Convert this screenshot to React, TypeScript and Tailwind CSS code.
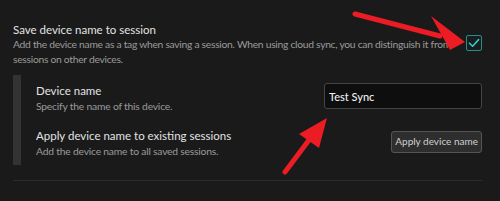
export default function App() {
  return (
    <div className="relative h-[201px] w-[500px] overflow-hidden bg-[#1a1a1a] font-['Lato',sans-serif]">
      <div className="pl-[13px] pr-[18px] pt-[22px]">
        <div className="flex items-start gap-2">
          <div className="min-w-0 flex-1">
            <div className="text-[11.5px] leading-[15px] text-[#e3e3e3]">Save device name to session</div>
            <p className="whitespace-nowrap text-[10.3px] leading-[15px] tracking-[-0.28px] text-[#9a9a9a]">
              Add the device name as a tag when saving a session. When using cloud sync, you can distinguish it from
              <br />
              sessions on other devices.
            </p>
          </div>
          <div className="mt-[13px] flex h-[16px] w-[16px] shrink-0 items-center justify-center rounded-[2px] border border-[#2b8c8c] bg-[#161e1e]">
            <svg width="12" height="12" viewBox="0 0 12 12" fill="none">
              <path d="M1.5 6.2 L4.6 9.2 L10.6 2.6" stroke="#3cc8c8" strokeWidth="1.6" strokeLinecap="round" strokeLinejoin="round" />
            </svg>
          </div>
        </div>

        <div className="mt-[8px] flex">
          <div className="w-[8px] bg-[#333333]" />
          <div className="flex flex-1 flex-col gap-[14px] pb-[6px] pl-[15px] pt-[8px]">
            <div className="flex items-center">
              <div className="flex-1">
                <div className="text-[11.5px] leading-[16px] text-[#e3e3e3]">Device name</div>
                <div className="text-[10.3px] leading-[15px] tracking-[-0.2px] text-[#9a9a9a]">Specify the name of this device.</div>
              </div>
              <input
                defaultValue="Test Sync"
                className="-mt-[5px] h-[26px] w-[158px] rounded-[3px] border border-[#454545] bg-[#0e0e0e] px-[4px] text-[11px] font-medium text-[#f0f0f0] outline-none"
              />
            </div>
            <div className="flex items-center">
              <div className="flex-1">
                <div className="text-[11.5px] leading-[16px] text-[#e3e3e3]">Apply device name to existing sessions</div>
                <div className="text-[10.3px] leading-[15px] tracking-[-0.2px] text-[#9a9a9a]">Add the device name to all saved sessions.</div>
              </div>
              <button className="-mt-[4px] h-[22px] whitespace-nowrap rounded-[3px] border border-[#555555] bg-[#2e2e2e] px-[3px] text-[10px] text-[#d0d0d0]">
                Apply device name
              </button>
            </div>
          </div>
        </div>

        <div className="mt-[15px] h-px bg-[#2c2c2c]" />
      </div>

      <svg className="pointer-events-none absolute left-0 top-0" width="500" height="201" viewBox="0 0 500 201">
        <line x1="355" y1="14" x2="440" y2="36" stroke="#ec1c24" strokeWidth="5" strokeLinecap="round" />
        <polygon points="431,16 465,42 450,50" fill="#ec1c24" />
        <line x1="285" y1="172" x2="312" y2="136" stroke="#ec1c24" strokeWidth="5" strokeLinecap="round" />
        <polygon points="327,118 299,134 319,148" fill="#ec1c24" />
      </svg>
    </div>
  );
}
